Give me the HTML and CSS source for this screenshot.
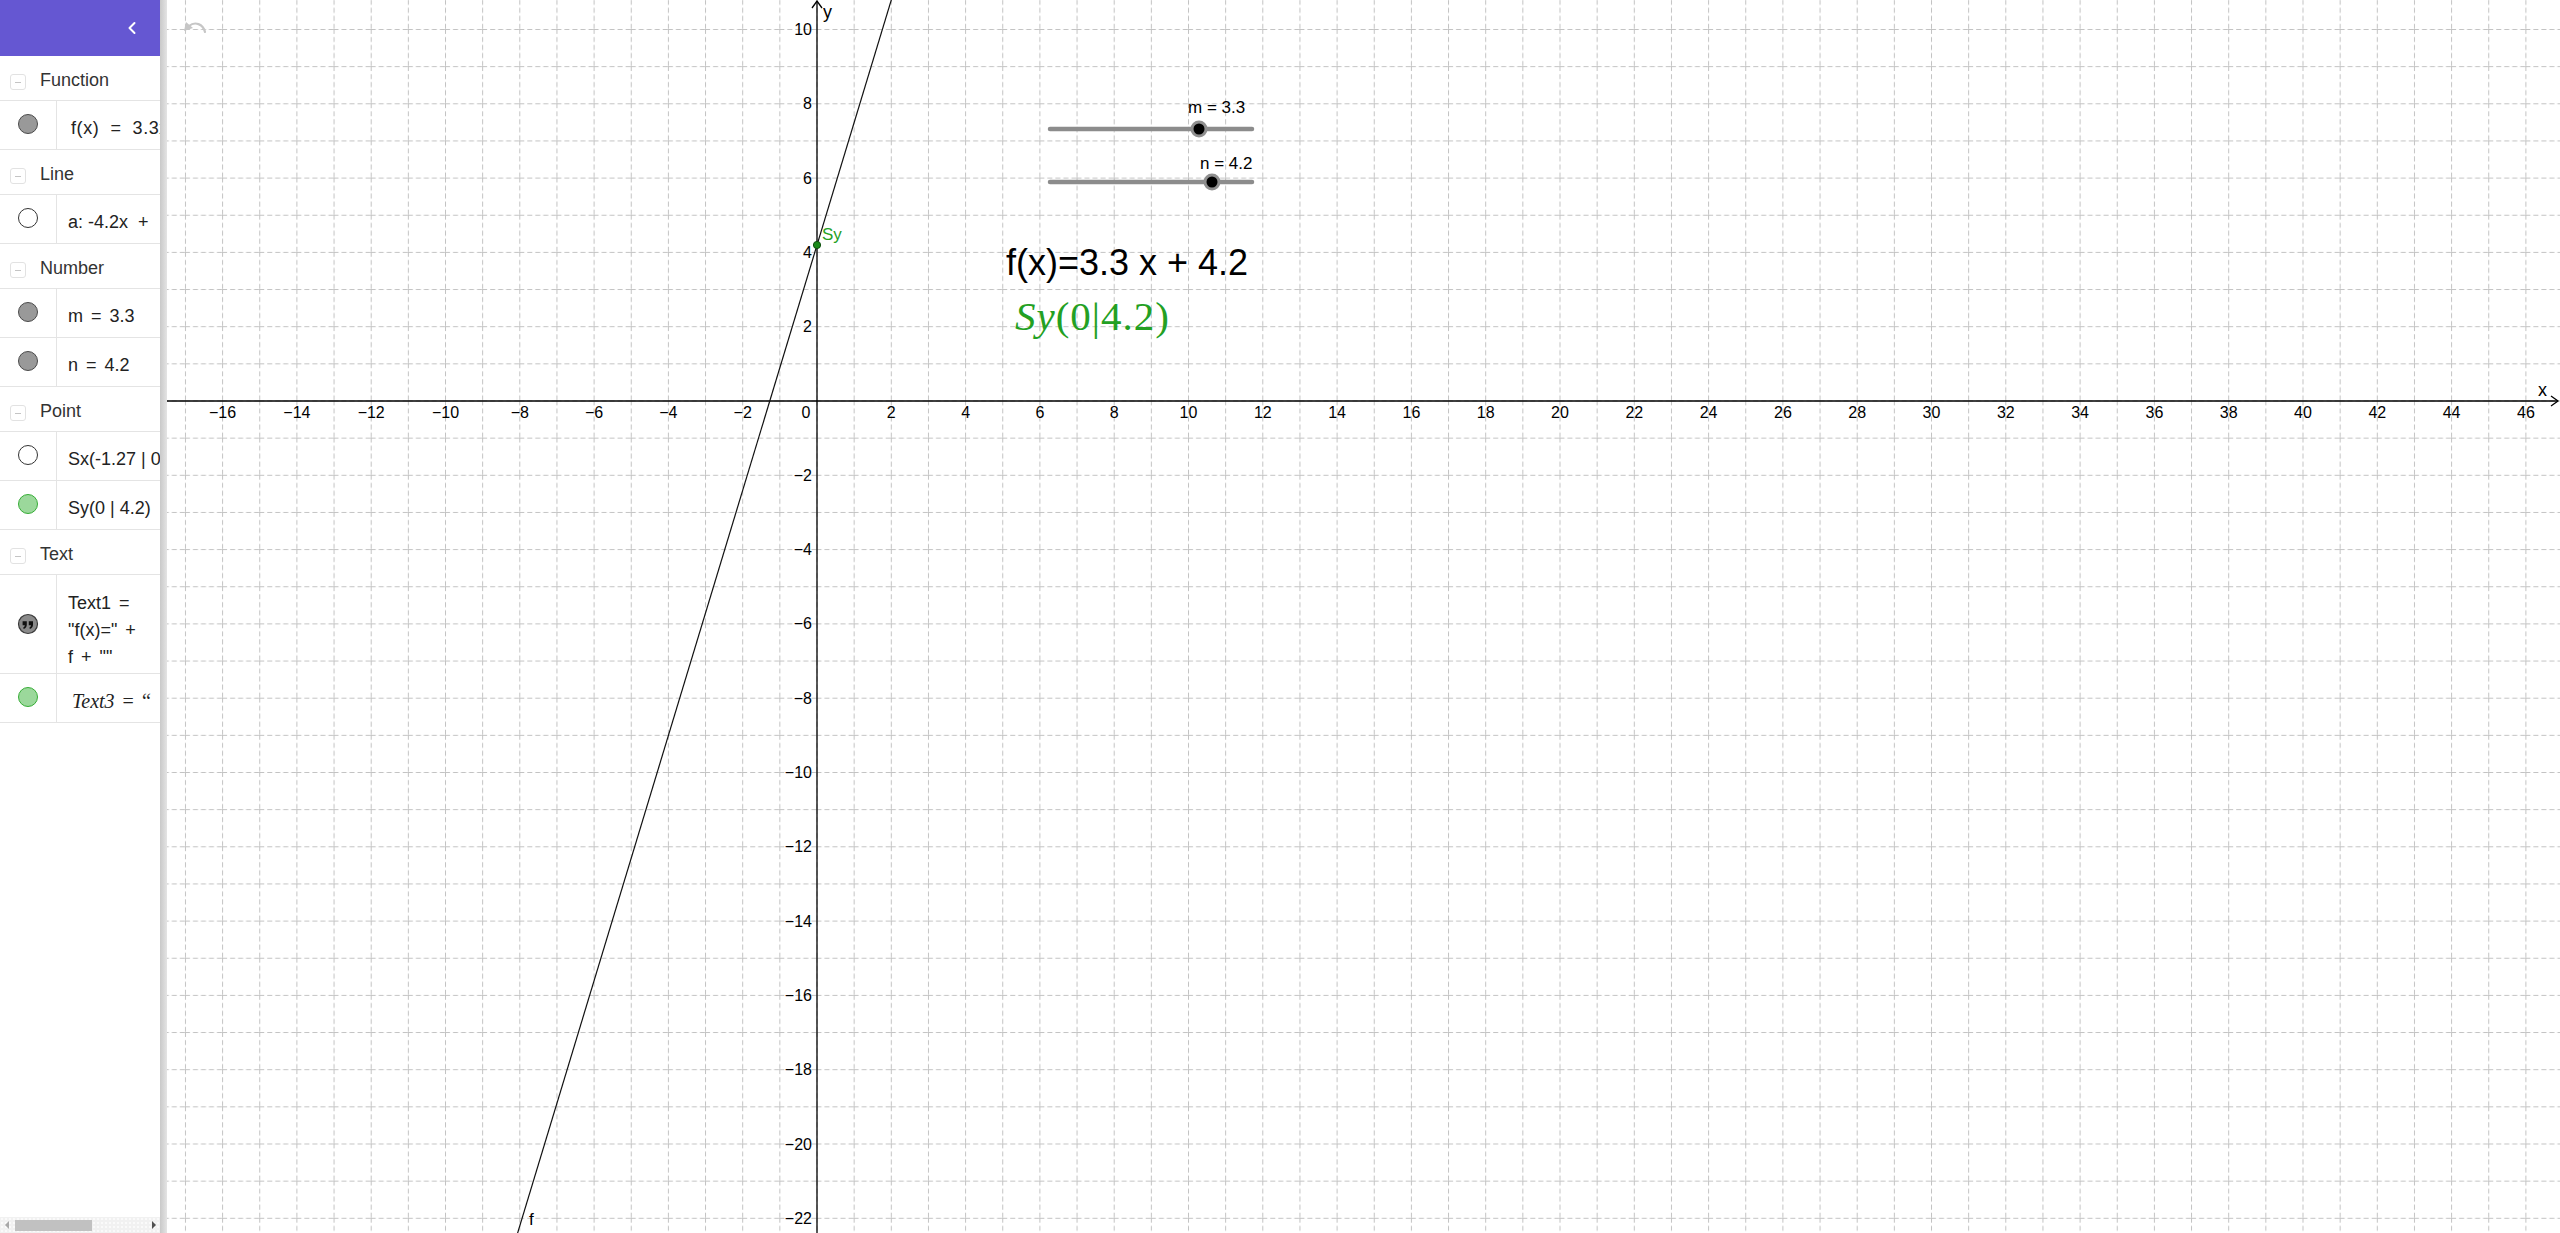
FILE: index.html
```html
<!DOCTYPE html>
<html lang="en">
<head>
<meta charset="utf-8">
<title>GeoGebra – Linear function</title>
<link rel="stylesheet" href="styles.css">
</head>
<body>
<div class="app">
  <aside class="av">
    <div class="av-header">
      <svg class="chev" width="12" height="16" viewBox="0 0 12 16"><polyline points="8.5,3 3.5,8 8.5,13" /></svg>
    </div>

    <div class="group"><span class="minus"></span><span class="group-name">Function</span></div>
    <div class="item">
      <div class="marble-cell"><span class="marble gray"></span></div>
      <div class="expr wide">f(x)<span class="op">=</span>3.3x<span class="op">+</span>4.2</div>
    </div>

    <div class="group"><span class="minus"></span><span class="group-name">Line</span></div>
    <div class="item">
      <div class="marble-cell"><span class="marble white"></span></div>
      <div class="expr">a: -4.2x<span class="op plus">+</span>y = 4.2</div>
    </div>

    <div class="group"><span class="minus"></span><span class="group-name">Number</span></div>
    <div class="item">
      <div class="marble-cell"><span class="marble gray"></span></div>
      <div class="expr">m<span class="op">=</span>3.3</div>
    </div>
    <div class="item">
      <div class="marble-cell"><span class="marble gray"></span></div>
      <div class="expr">n<span class="op">=</span>4.2</div>
    </div>

    <div class="group"><span class="minus"></span><span class="group-name">Point</span></div>
    <div class="item">
      <div class="marble-cell"><span class="marble white"></span></div>
      <div class="expr">Sx(-1.27 | 0)</div>
    </div>
    <div class="item">
      <div class="marble-cell"><span class="marble green"></span></div>
      <div class="expr">Sy(0 | 4.2)</div>
    </div>

    <div class="group"><span class="minus"></span><span class="group-name">Text</span></div>
    <div class="item tall">
      <div class="marble-cell center">
        <svg class="quote-marble" width="22" height="22" viewBox="0 0 22 22">
          <circle cx="11" cy="11" r="9.5" fill="#8a8a8a" stroke="#3a3a3a" stroke-width="1.2"/>
          <path d="M5.6 8.2h4.2v3.4c0 2.1-1 3.6-3 4.3l-.7-1.1c1-.5 1.6-1.3 1.7-2.5H5.6z" fill="#111"/>
          <path d="M11.8 8.2H16v3.4c0 2.1-1 3.6-3 4.3l-.7-1.1c1-.5 1.6-1.3 1.7-2.5h-2.2z" fill="#111"/>
        </svg>
      </div>
      <div class="expr multi">Text1<span class="op">=</span><br>"f(x)="<span class="op">+</span><br>f<span class="op">+</span>""</div>
    </div>
    <div class="item">
      <div class="marble-cell"><span class="marble green"></span></div>
      <div class="expr latex"><span class="it">Text3</span><span class="op">=</span>“</div>
    </div>

    <div class="hscroll">
      <span class="arr-left"></span>
      <span class="thumb"></span>
      <span class="arr-right"></span>
    </div>
  </aside>

  <div class="splitter"></div>

  <main class="graphics">
    <svg class="canvas" width="2393" height="1233" viewBox="167 0 2393 1233">
      <defs>
        <pattern id="grid" x="816.5" y="400.5" width="37.15" height="37.15" patternUnits="userSpaceOnUse">
          <line x1="0.5" y1="0" x2="0.5" y2="37.15" class="gridline"/>
          <line x1="0" y1="0.5" x2="37.15" y2="0.5" class="gridline"/>
        </pattern>
      </defs>
      <rect x="167" y="0" width="2393" height="1233" fill="#fff"/>
      <rect x="167" y="0" width="2393" height="1233" fill="url(#grid)"/>

      <!-- axes -->
      <line class="axis" x1="167" y1="401" x2="2558" y2="401"/>
      <polyline class="axis" points="2551,396 2558,401 2551,406"/>
      <line class="axis" x1="817" y1="1" x2="817" y2="1233"/>
      <polyline class="axis" points="812,8 817,1 822,8"/>
      <text class="axis-name" x="2538" y="396">x</text>
      <text class="axis-name" x="823" y="18">y</text>

      <!-- x axis numbers -->
      <g class="num xnum">
        <text x="222.6" y="418">−16</text>
        <text x="296.9" y="418">−14</text>
        <text x="371.2" y="418">−12</text>
        <text x="445.5" y="418">−10</text>
        <text x="519.8" y="418">−8</text>
        <text x="594.1" y="418">−6</text>
        <text x="668.4" y="418">−4</text>
        <text x="742.7" y="418">−2</text>
        <text x="806" y="418">0</text>
        <text x="891.3" y="418">2</text>
        <text x="965.6" y="418">4</text>
        <text x="1039.9" y="418">6</text>
        <text x="1114.2" y="418">8</text>
        <text x="1188.5" y="418">10</text>
        <text x="1262.8" y="418">12</text>
        <text x="1337.1" y="418">14</text>
        <text x="1411.4" y="418">16</text>
        <text x="1485.7" y="418">18</text>
        <text x="1560" y="418">20</text>
        <text x="1634.3" y="418">22</text>
        <text x="1708.6" y="418">24</text>
        <text x="1782.9" y="418">26</text>
        <text x="1857.2" y="418">28</text>
        <text x="1931.5" y="418">30</text>
        <text x="2005.8" y="418">32</text>
        <text x="2080.1" y="418">34</text>
        <text x="2154.4" y="418">36</text>
        <text x="2228.7" y="418">38</text>
        <text x="2303" y="418">40</text>
        <text x="2377.3" y="418">42</text>
        <text x="2451.6" y="418">44</text>
        <text x="2525.9" y="418">46</text>
      </g>

      <!-- y axis numbers -->
      <g class="num ynum">
        <text x="812" y="35">10</text>
        <text x="812" y="109.3">8</text>
        <text x="812" y="183.6">6</text>
        <text x="812" y="257.9">4</text>
        <text x="812" y="332.2">2</text>
        <text x="812" y="480.8">−2</text>
        <text x="812" y="555.1">−4</text>
        <text x="812" y="629.4">−6</text>
        <text x="812" y="703.7">−8</text>
        <text x="812" y="778">−10</text>
        <text x="812" y="852.3">−12</text>
        <text x="812" y="926.6">−14</text>
        <text x="812" y="1000.9">−16</text>
        <text x="812" y="1075.2">−18</text>
        <text x="812" y="1149.5">−20</text>
        <text x="812" y="1223.8">−22</text>
      </g>

      <!-- function f -->
      <line class="fline" x1="892.8" y1="-5" x2="515.5" y2="1240"/>
      <text class="obj-label" x="529" y="1225">f</text>

      <!-- point Sy -->
      <circle cx="817" cy="245" r="3.6" class="pt"/>
      <text class="obj-label green" x="822" y="240">Sy</text>

      <!-- sliders -->
      <text class="slider-label" x="1188" y="113">m = 3.3</text>
      <line class="track" x1="1050" y1="129" x2="1252" y2="129"/>
      <circle cx="1199" cy="129" r="8.5" class="knob-halo"/>
      <circle cx="1199" cy="129" r="5.5" class="knob"/>

      <text class="slider-label" x="1200" y="169">n = 4.2</text>
      <line class="track" x1="1050" y1="182" x2="1252" y2="182"/>
      <circle cx="1212" cy="182" r="8.5" class="knob-halo"/>
      <circle cx="1212" cy="182" r="5.5" class="knob"/>

      <!-- texts -->
      <text class="big-text" x="1006" y="275">f(x)=3.3 x + 4.2</text>
      <text class="sy-text" x="1015" y="330"><tspan class="it">Sy</tspan>(0|4.2)</text>

      <!-- undo -->
      <path class="undo" d="M205 32 C203 24 195 21 189 26"/>
      <polygon class="undo-head" points="184,31 186,22 193,28"/>
    </svg>
  </main>
</div>
</body>
</html>
```

FILE: styles.css
```css
* { box-sizing: border-box; }

html, body {
  margin: 0;
  padding: 0;
  width: 2560px;
  height: 1233px;
  overflow: hidden;
  background: #fff;
  font-family: "Liberation Sans", Arial, sans-serif;
}

.app {
  display: flex;
  width: 2560px;
  height: 1233px;
}

/* Algebra view */
.av {
  width: 160px;
  flex: 0 0 160px;
  display: flex;
  flex-direction: column;
  overflow: hidden;
  background: #fff;
  color: #333;
}

.av-header {
  height: 56px;
  flex: 0 0 56px;
  background: #6557d2;
  display: flex;
  align-items: center;
  justify-content: flex-end;
  padding-right: 22px;
}

.chev polyline {
  fill: none;
  stroke: #fff;
  stroke-width: 2;
  stroke-linecap: round;
  stroke-linejoin: round;
}

.group {
  height: 45px;
  flex: 0 0 45px;
  border-bottom: 1px solid #e4e4e4;
  display: flex;
  align-items: flex-start;
  padding-left: 10px;
}

.minus {
  width: 16px;
  height: 16px;
  margin-top: 18px;
  border: 1px solid #e2e2e2;
  border-radius: 3px;
  position: relative;
  flex: 0 0 16px;
}

.minus::after {
  content: "";
  position: absolute;
  left: 4px;
  right: 4px;
  top: 7px;
  height: 1px;
  background: #c4c4c4;
}

.group-name {
  margin-left: 14px;
  margin-top: 13px;
  font-size: 18px;
  line-height: 22px;
  color: #333;
}

.item {
  height: 49px;
  flex: 0 0 49px;
  border-bottom: 1px solid #e4e4e4;
  display: flex;
}

.item.tall {
  height: 99px;
  flex: 0 0 99px;
}

.marble-cell {
  width: 57px;
  flex: 0 0 57px;
  border-right: 1px solid #e4e4e4;
  display: flex;
  justify-content: center;
  align-items: flex-start;
  padding-top: 13px;
}

.marble-cell.center {
  align-items: center;
  padding-top: 0;
}

.marble {
  width: 20px;
  height: 20px;
  border-radius: 50%;
  display: block;
}

.marble.gray { background: #999; border: 1.3px solid #4a4a4a; }
.marble.white { background: #fff; border: 1.3px solid #333; }
.marble.green { background: #9bd89b; border: 1.3px solid #36ad36; }

.expr {
  padding-left: 11px;
  padding-top: 16px;
  font-size: 18px;
  line-height: 22px;
  white-space: nowrap;
  overflow: hidden;
  color: #222;
}

.expr.wide {
  padding-left: 14px;
  letter-spacing: 0.6px;
}

.expr.wide .op { margin: 0 11px; }

.expr.multi {
  padding-top: 15px;
  line-height: 27px;
}

.op { margin: 0 8px; }

.op.plus { margin: 0 12px 0 10px; }

.expr.latex {
  font-family: "Liberation Serif", "Times New Roman", serif;
  font-size: 20px;
  padding-left: 15px;
}

.it { font-style: italic; }

.hscroll {
  margin-top: auto;
  height: 16px;
  flex: 0 0 16px;
  background-color: #f1f1f1;
  background-image: radial-gradient(#fafafa 0.8px, transparent 1px);
  background-size: 4px 4px;
  display: flex;
  align-items: center;
  padding: 0 4px 0 5px;
}

.arr-left {
  width: 0;
  height: 0;
  border-top: 4px solid transparent;
  border-bottom: 4px solid transparent;
  border-right: 4px solid #a8a8a8;
}

.thumb {
  width: 77px;
  height: 11px;
  margin-left: 6px;
  background: #c1c1c1;
}

.arr-right {
  margin-left: auto;
  width: 0;
  height: 0;
  border-top: 4px solid transparent;
  border-bottom: 4px solid transparent;
  border-left: 4px solid #505050;
}

.splitter {
  width: 7px;
  flex: 0 0 7px;
  background: linear-gradient(to right, #c9c9c9, #e4e4e4);
}

/* Graphics view */
.graphics {
  flex: 1 1 auto;
  overflow: hidden;
  height: 1233px;
}

.canvas { display: block; }

.gridline {
  stroke: #c2c2c2;
  stroke-width: 1;
  stroke-dasharray: 5 3;
}

.axis {
  stroke: #000;
  stroke-width: 1.3;
  fill: none;
}

.axis-name {
  font-family: "Liberation Sans", Arial, sans-serif;
  font-size: 18px;
  fill: #000;
}

.num text {
  font-family: "Liberation Sans", Arial, sans-serif;
  font-size: 16px;
  fill: #000;
}

.xnum text { text-anchor: middle; }
.ynum text { text-anchor: end; }

.fline {
  stroke: #111;
  stroke-width: 1.2;
}

.obj-label {
  font-family: "Liberation Sans", Arial, sans-serif;
  font-size: 17px;
  fill: #000;
}

.obj-label.green { fill: #24a124; }

.pt {
  fill: #1a8a1a;
  stroke: #0b4d0b;
  stroke-width: 1;
}

.slider-label {
  font-family: "Liberation Sans", Arial, sans-serif;
  font-size: 17px;
  fill: #000;
}

.track {
  stroke: #8c8c8c;
  stroke-width: 4.5;
  stroke-linecap: round;
}

.knob-halo { fill: #8f8f8f; }
.knob { fill: #000; }

.big-text {
  font-family: "Liberation Sans", Arial, sans-serif;
  font-size: 36px;
  fill: #000;
}

.sy-text {
  font-family: "Liberation Serif", "Times New Roman", serif;
  font-size: 41px;
  fill: #23a023;
  letter-spacing: 1px;
}

.undo {
  fill: none;
  stroke: #c6c6c6;
  stroke-width: 2.2;
  stroke-linecap: round;
}

.undo-head { fill: #c6c6c6; }
```
